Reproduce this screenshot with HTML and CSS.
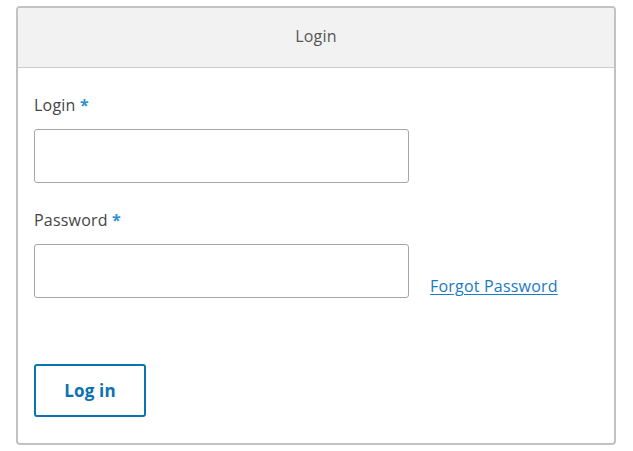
FILE: index.html
```html
<!DOCTYPE html>
<html lang="en">
<head>
<meta charset="utf-8">
<title>Login</title>
<link rel="stylesheet" href="styles.css">
</head>
<body>
<div class="card">
  <div class="card-header">Login</div>
  <form class="card-body">
    <div class="field">
      <label class="label" for="login">Login <span class="req">*</span></label>
      <div class="row">
        <input class="input" id="login" type="text">
      </div>
    </div>
    <div class="field">
      <label class="label" for="password">Password <span class="req">*</span></label>
      <div class="row">
        <input class="input" id="password" type="password">
        <a class="link" href="#">Forgot Password</a>
      </div>
    </div>
    <button class="btn" type="button">Log in</button>
  </form>
</div>
</body>
</html>
```
FILE: styles.css
```css
html, body {
  margin: 0;
  padding: 0;
  background: #ffffff;
}
body {
  font-family: "Open Sans", "Noto Sans", sans-serif;
  font-size: 16px;
  line-height: 24px;
  letter-spacing: 0.2px;
  color: #454545;
  padding: 6px 17px 0 16px;
}
.card {
  width: 600px;
  box-sizing: border-box;
  border: 2px solid #c2c2c2;
  border-radius: 4px;
  background: #fff;
}
.card-header {
  background: #f2f2f2;
  border-bottom: 1px solid #cccccc;
  border-radius: 2px 2px 0 0;
  text-align: center;
  color: #565656;
  padding: 16px 0 19px;
}
.card-body {
  padding: 25px 16px 26px;
  margin: 0;
}
.field {
  margin-bottom: 25px;
}
.label {
  display: block;
  color: #454545;
  margin-bottom: 12px;
}
.req {
  color: #2f8fd4;
  font-weight: 700;
}
.row {
  display: flex;
  align-items: flex-end;
  gap: 21px;
}
.input {
  width: 375px;
  height: 54px;
  box-sizing: border-box;
  border: 1px solid #a6a6a6;
  border-radius: 3px;
  margin: 0;
  padding: 0 10px;
  font: inherit;
  background: #fff;
}
.link {
  color: #1a7ac2;
  text-decoration: underline;
  text-underline-offset: 2px;
}
.btn {
  display: block;
  margin-top: 66px;
  width: 112px;
  height: 53px;
  box-sizing: border-box;
  border: 2px solid #0a74b3;
  border-radius: 3px;
  background: #fff;
  color: #0a72b0;
  font-family: "Open Sans", "Noto Sans", sans-serif;
  font-weight: 700;
  font-size: 17px;
  letter-spacing: 0.2px;
  padding: 0;
}
```
